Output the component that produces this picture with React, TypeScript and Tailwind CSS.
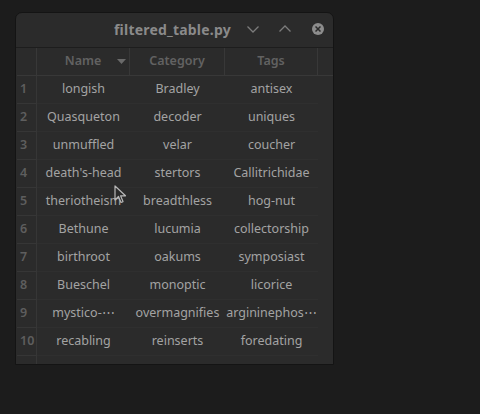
const rows: [string, string, string][] = [
  ["longish", "Bradley", "antisex"],
  ["Quasqueton", "decoder", "uniques"],
  ["unmuffled", "velar", "coucher"],
  ["death's-head", "stertors", "Callitrichidae"],
  ["theriotheism", "breadthless", "hog-nut"],
  ["Bethune", "lucumia", "collectorship"],
  ["birthroot", "oakums", "symposiast"],
  ["Bueschel", "monoptic", "licorice"],
  ["mystico-\u22EF", "overmagnifies", "argininephos\u22EF"],
  ["recabling", "reinserts", "foredating"],
];

function Chevron({ up }: { up?: boolean }) {
  return (
    <svg width="14" height="10" viewBox="0 0 14 10" fill="none" stroke="#7c7c7c" strokeWidth="1.3">
      {up ? <path d="M1.5 7.5 L7 2 L12.5 7.5" /> : <path d="M1.5 2.5 L7 8 L12.5 2.5" />}
    </svg>
  );
}

export default function App() {
  return (
    <div className="relative w-[480px] h-[414px] bg-[#1c1c1c] pl-[15px] pt-[12px]" style={{ fontFamily: '"Noto Sans", "Open Sans", sans-serif' }}>
      <div className="w-[319px] h-[353px] bg-[#2b2b2b] border border-[#141414] rounded-t-[7px] flex flex-col overflow-hidden">
        {/* Title bar */}
        <div className="h-[35px] flex items-center border-b border-[#1d1d1d] shrink-0 pb-[2px]">
          <div className="w-[98px]" />
          <div className="text-[14px] font-bold text-[#8a8a8a] tracking-[0.2px]">filtered_table.py</div>
          <div className="ml-[15px] flex items-center gap-[18px]">
            <Chevron />
            <Chevron up />
          </div>
          <div className="ml-[20px] w-[12px] h-[12px] rounded-full bg-[#8c8c8c] flex items-center justify-center">
            <svg width="6" height="6" viewBox="0 0 6 6" stroke="#2b2b2b" strokeWidth="1.5">
              <path d="M0.5 0.5 L5.5 5.5 M5.5 0.5 L0.5 5.5" />
            </svg>
          </div>
        </div>

        {/* Table */}
        <div className="flex-1 pl-[1px] text-[12.5px]">
          <div className="grid grid-cols-[20px_93px_95px_93px] h-[28px] border-b border-[#383838]">
            <div className="border-r border-[#383838]" />
            <div className="relative flex items-center justify-center border-r border-[#383838] font-semibold text-[#626262]">
              Name
              <svg className="absolute right-[3px] top-[11px]" width="9" height="5" viewBox="0 0 9 5">
                <path d="M0 0 H9 L4.5 5 Z" fill="#6a6a6a" />
              </svg>
            </div>
            <div className="flex items-center justify-center border-r border-[#383838] font-semibold text-[#626262]">Category</div>
            <div className="flex items-center justify-center border-r border-[#383838] font-semibold text-[#626262]">Tags</div>
          </div>
          {rows.map((r, i) => (
            <div key={i} className="grid grid-cols-[20px_93px_95px_93px] h-[28px]">
              <div className="flex items-center pl-[3px] border-r border-b border-[#363636] font-semibold text-[#5e5e5e]">{i + 1}</div>
              <div className="flex items-center justify-center border-b border-[#2f2f2f] text-[#a3a3a3] whitespace-nowrap">{r[0]}</div>
              <div className="flex items-center justify-center border-b border-[#2f2f2f] text-[#a3a3a3] whitespace-nowrap">{r[1]}</div>
              <div className="flex items-center justify-center border-b border-[#2f2f2f] text-[#a3a3a3] whitespace-nowrap">{r[2]}</div>
            </div>
          ))}
          <div className="grid grid-cols-[20px_93px_95px_93px] h-[11px]">
            <div className="border-r border-[#363636]" />
          </div>
        </div>
      </div>

      {/* mouse pointer */}
      <svg className="absolute left-[114px] top-[185px]" width="14" height="20" viewBox="0 0 14 20">
        <path d="M1 1 L1 15 L4.5 11.5 L7 17.5 L9 16.6 L6.6 10.8 L11.5 10.8 Z" fill="#2b2b2b" stroke="#b8b8b8" strokeWidth="1.2" strokeLinejoin="round" />
      </svg>
    </div>
  );
}
